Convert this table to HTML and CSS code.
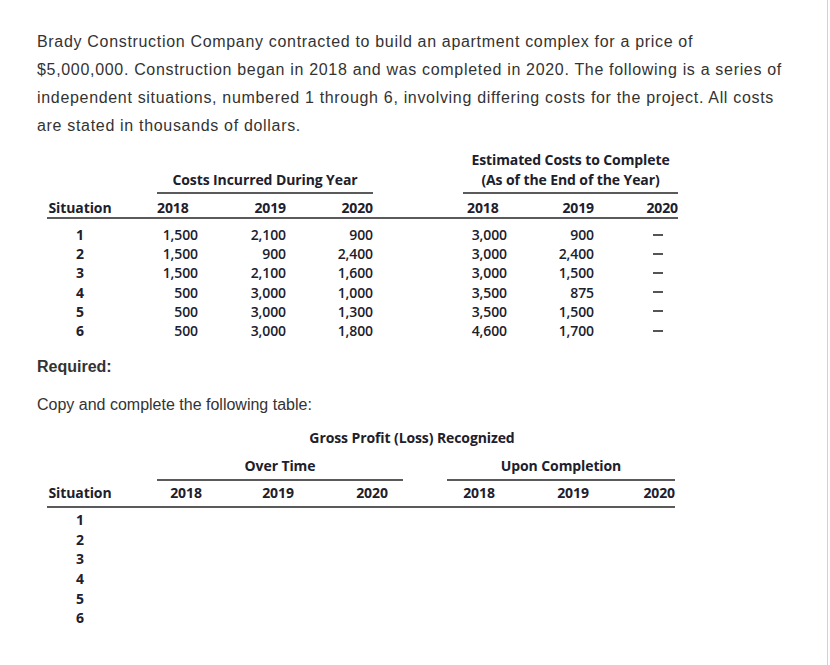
FILE: index.html
```html
<!DOCTYPE html>
<html>
<head>
<meta charset="utf-8">
<link rel="stylesheet" href="styles.css">
</head>
<body>
<div class="page">
  <p class="intro">Brady Construction Company contracted to build an apartment complex for a price of<br>$5,000,000. Construction began in 2018 and was completed in 2020. The following is a series of<br>independent situations, numbered 1 through 6, involving differing costs for the project. All costs<br>are stated in thousands of dollars.</p>

  <div class="t1">
    <div class="t1-head">
      <div class="grp grp-costs">Costs Incurred During Year</div>
      <div class="grp grp-est">Estimated Costs to Complete<br>(As of the End of the Year)</div>
    </div>
    <div class="t1-cols">
      <div class="hc c">Situation</div>
      <div></div>
      <div class="hc">2018</div>
      <div class="hc r">2019</div>
      <div class="hc r">2020</div>
      <div></div>
      <div class="hc l">2018</div>
      <div class="hc r">2019</div>
      <div class="hc r">2020</div>
    </div>
    <div class="t1-body">
      <div class="sit">1</div><div></div><div class="num">1,500</div><div class="num">2,100</div><div class="num">900</div><div></div><div class="num">3,000</div><div class="num">900</div><div class="dash"><span class="bar"></span></div>
      <div class="sit">2</div><div></div><div class="num">1,500</div><div class="num">900</div><div class="num">2,400</div><div></div><div class="num">3,000</div><div class="num">2,400</div><div class="dash"><span class="bar"></span></div>
      <div class="sit">3</div><div></div><div class="num">1,500</div><div class="num">2,100</div><div class="num">1,600</div><div></div><div class="num">3,000</div><div class="num">1,500</div><div class="dash"><span class="bar"></span></div>
      <div class="sit">4</div><div></div><div class="num">500</div><div class="num">3,000</div><div class="num">1,000</div><div></div><div class="num">3,500</div><div class="num">875</div><div class="dash"><span class="bar"></span></div>
      <div class="sit">5</div><div></div><div class="num">500</div><div class="num">3,000</div><div class="num">1,300</div><div></div><div class="num">3,500</div><div class="num">1,500</div><div class="dash"><span class="bar"></span></div>
      <div class="sit">6</div><div></div><div class="num">500</div><div class="num">3,000</div><div class="num">1,800</div><div></div><div class="num">4,600</div><div class="num">1,700</div><div class="dash"><span class="bar"></span></div>
    </div>
  </div>

  <p class="req">Required:</p>
  <p class="copy">Copy and complete the following table:</p>

  <div class="t2">
    <div class="t2-title">Gross Profit (Loss) Recognized</div>
    <div class="t2-head">
      <div class="grp2 grp-over">Over Time</div>
      <div class="grp2 grp-upon">Upon Completion</div>
    </div>
    <div class="t2-cols">
      <div class="hc c">Situation</div>
      <div></div>
      <div class="hc c">2018</div>
      <div class="hc c">2019</div>
      <div class="hc c">2020</div>
      <div></div>
      <div class="hc c">2018</div>
      <div class="hc c">2019</div>
      <div class="hc r">2020</div>
    </div>
    <div class="t2-body">
      <div class="sit">1</div>
      <div class="sit">2</div>
      <div class="sit">3</div>
      <div class="sit">4</div>
      <div class="sit">5</div>
      <div class="sit">6</div>
    </div>
  </div>
</div>
</body>
</html>
```

FILE: styles.css
```css
html, body {
  margin: 0;
  padding: 0;
  background: #ffffff;
}

.page {
  width: 828px;
  height: 665px;
  box-sizing: border-box;
  border-right: 1px solid #d2d2d2;
  padding: 28px 0 0 37px;
  font-family: "Liberation Sans", Arial, sans-serif;
  color: #333333;
  overflow: hidden;
}

.intro {
  margin: 0;
  width: 780px;
  font-size: 16px;
  line-height: 28px;
  letter-spacing: 0.68px;
  white-space: nowrap;
}

/* ---------- shared table type ---------- */
.t1,
.t2 {
  font-family: "Open Sans", Lato, sans-serif;
  font-weight: 700;
  font-size: 14px;
  color: #20202c;
  letter-spacing: -0.1px;
}

.hc {
  line-height: 18px;
}

.hc.c {
  text-align: center;
}

.hc.r {
  text-align: right;
}

.hc.l {
  text-align: left;
  padding-left: 4px;
}

.sit {
  text-align: center;
  font-weight: 700;
}

/* ---------- table 1 ---------- */
.t1 {
  margin: 10px 0 0 10px;
  width: 631px;
}

.t1-head,
.t1-cols,
.t1-body {
  display: grid;
  grid-template-columns: 66px 44px 41px 88px 87px 90px 44px 87px 84px;
}

.grp {
  text-align: center;
  line-height: 20px;
  padding-bottom: 2px;
  border-bottom: 2px solid #5a5a5a;
  align-self: end;
}

.grp-costs {
  grid-column: 3 / 6;
}

.grp-est {
  grid-column: 7 / 10;
}

.t1-cols {
  padding-top: 5px;
  border-bottom: 2px solid #5a5a5a;
}

.t1-body {
  padding-top: 6px;
  grid-auto-rows: 19.2px;
  line-height: 19.2px;
  font-weight: 600;
}

.num {
  text-align: right;
}

.dash {
  display: flex;
  align-items: center;
  justify-content: flex-end;
  padding-right: 15px;
}

.bar {
  display: block;
  width: 10px;
  height: 2px;
  background: #555555;
}

/* ---------- text ---------- */
.req {
  margin: 13px 0 0;
  font-size: 16px;
  line-height: 28px;
  font-weight: 700;
}

.copy {
  margin: 10px 0 0;
  font-size: 16px;
  line-height: 28px;
}

/* ---------- table 2 ---------- */
.t2 {
  margin: 7px 0 0 10px;
  width: 628px;
}

.t2-title {
  margin-left: 110px;
  width: 510px;
  text-align: center;
  line-height: 24px;
}

.t2-head,
.t2-cols {
  display: grid;
  grid-template-columns: 66px 44px 58px 126px 62px 44px 64px 124px 40px;
}

.grp2 {
  text-align: center;
  line-height: 20px;
  padding-top: 6px;
  padding-bottom: 3px;
  border-bottom: 2px solid #5a5a5a;
}

.grp-over {
  grid-column: 3 / 6;
}

.grp-upon {
  grid-column: 7 / 10;
}

.t2-cols {
  padding-top: 3px;
  padding-bottom: 4px;
  border-bottom: 2px solid #5a5a5a;
}

.t2-body {
  padding-top: 2px;
  width: 66px;
  display: grid;
  grid-auto-rows: 19.6px;
  line-height: 19.6px;
}
```
